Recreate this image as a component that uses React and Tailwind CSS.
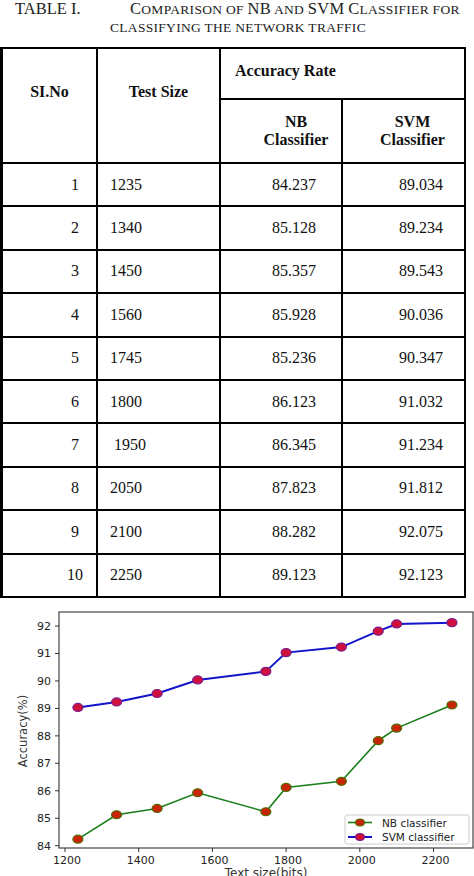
import React from "react";

const rows = [
  ["1", "1235", "84.237", "89.034"],
  ["2", "1340", "85.128", "89.234"],
  ["3", "1450", "85.357", "89.543"],
  ["4", "1560", "85.928", "90.036"],
  ["5", "1745", "85.236", "90.347"],
  ["6", "1800", "86.123", "91.032"],
  ["7", "\u00a01950", "86.345", "91.234"],
  ["8", "2050", "87.823", "91.812"],
  ["9", "2100", "88.282", "92.075"],
  ["10", "2250", "89.123", "92.123"],
];

const xs = [1235, 1340, 1450, 1560, 1745, 1800, 1950, 2050, 2100, 2250];
const nb = [84.237, 85.128, 85.357, 85.928, 85.236, 86.123, 86.345, 87.823, 88.282, 89.123];
const svm = [89.034, 89.234, 89.543, 90.036, 90.347, 91.032, 91.234, 91.812, 92.075, 92.123];

const px = (v) => 65 + (v - 1200) * 0.3685;
const py = (v) => 845.7 - (v - 84) * 27.46;

function SC({ text }) {
  // render small caps manually: uppercase letters big, lowercase as smaller capitals
  const parts = [];
  let cur = "";
  let curBig = null;
  for (const ch of text) {
    const big = ch !== ch.toLowerCase();
    if (curBig === null) curBig = big;
    if (big !== curBig) {
      parts.push([cur, curBig]);
      cur = "";
      curBig = big;
    }
    cur += ch;
  }
  if (cur) parts.push([cur, curBig]);
  return (
    <>
      {parts.map(([s, big], i) =>
        big ? (
          <span key={i} className="text-[16.5px] tracking-[0.3px]">{s}</span>
        ) : (
          <span key={i} className="text-[13.5px] tracking-[0.3px]">{s.toUpperCase()}</span>
        )
      )}
    </>
  );
}

function Chart() {
  const nbPts = xs.map((x, i) => `${px(x)},${py(nb[i])}`).join(" ");
  const svmPts = xs.map((x, i) => `${px(x)},${py(svm[i])}`).join(" ");
  const font = "'DejaVu Sans', sans-serif";
  return (
    <svg width="474" height="278" viewBox="0 598 474 278" className="block">
      <rect x="59" y="612" width="414" height="236" fill="#fff" stroke="#444" strokeWidth="1.2" />
      {[84, 85, 86, 87, 88, 89, 90, 91, 92].map((v) => (
        <g key={v}>
          <line x1="55" y1={py(v)} x2="59" y2={py(v)} stroke="#333" strokeWidth="1" />
          <text x="51" y={py(v) + 4} fontSize="11" textAnchor="end" fill="#222" fontFamily={font}>
            {v}
          </text>
        </g>
      ))}
      {[1200, 1400, 1600, 1800, 2000, 2200].map((v) => (
        <g key={v}>
          <line x1={px(v)} y1="848" x2={px(v)} y2="852" stroke="#333" strokeWidth="1" />
          <text x={px(v) + 2} y="864" fontSize="11" textAnchor="middle" fill="#222" fontFamily={font}>
            {v}
          </text>
        </g>
      ))}
      <text
        x="0"
        y="0"
        fontSize="11.5"
        textAnchor="middle"
        fill="#333"
        fontFamily={font}
        transform="translate(27 731) rotate(-90)"
      >
        Accuracy(%)
      </text>
      <text x="266" y="877" fontSize="12" textAnchor="middle" fill="#333" fontFamily={font}>
        Text size(bits)
      </text>
      <polyline points={svmPts} fill="none" stroke="#1414c8" strokeWidth="2" />
      <polyline points={nbPts} fill="none" stroke="#1a7f1a" strokeWidth="1.6" />
      {xs.map((x, i) => (
        <ellipse key={"s" + i} cx={px(x)} cy={py(svm[i])} rx="5" ry="4" fill="#d0103c" stroke="#7a1a8c" strokeWidth="1.2" />
      ))}
      {xs.map((x, i) => (
        <ellipse key={"n" + i} cx={px(x)} cy={py(nb[i])} rx="5" ry="4" fill="#c82408" stroke="#4f6a00" strokeWidth="1.2" />
      ))}
      <rect x="345" y="815" width="124" height="29" rx="2" fill="#fff" stroke="#ccc" strokeWidth="1" />
      <line x1="348" y1="822.5" x2="372" y2="822.5" stroke="#1a7f1a" strokeWidth="1.6" />
      <ellipse cx="360" cy="822.5" rx="4.5" ry="3.5" fill="#c82408" stroke="#4f6a00" strokeWidth="1.2" />
      <text x="382" y="826.5" fontSize="10.5" fill="#222" fontFamily={font}>NB classifier</text>
      <line x1="348" y1="837" x2="372" y2="837" stroke="#1414c8" strokeWidth="2" />
      <ellipse cx="360" cy="837" rx="4.5" ry="3.5" fill="#d0103c" stroke="#7a1a8c" strokeWidth="1.2" />
      <text x="382" y="841" fontSize="10.5" fill="#222" fontFamily={font}>SVM classifier</text>
    </svg>
  );
}

export default function App() {
  const cell = "border-r-2 border-b-2 border-black";
  return (
    <div
      className="w-[474px] h-[876px] bg-white overflow-hidden text-[#111]"
      style={{ fontFamily: "'Liberation Serif', 'Times New Roman', serif" }}
    >
      <div className="leading-[17px] h-[47px] text-[#222] whitespace-nowrap">
        <div className="flex items-baseline">
          <span className="pl-[15px] w-[130px] text-[16.5px]">TABLE I.</span>
          <span>
            <SC text="Comparison of NB and SVM Classifier for" />
          </span>
        </div>
        <div className="pl-[110px]">
          <SC text="classifying the network traffic" />
        </div>
      </div>
      <div className="w-[466px] border-t-2 border-l-[3px] border-black grid grid-cols-[95px_123px_122px_123px] grid-rows-[51px_64px_repeat(10,43.4px)] text-[16px] leading-[18px]">
        <div className={`${cell} row-span-2 flex items-center justify-center pb-[28px] font-bold`}>SI.No</div>
        <div className={`${cell} row-span-2 flex items-center justify-center pb-[28px] font-bold`}>Test Size</div>
        <div className={`${cell} col-span-2 flex items-center pl-[14px] pb-[6px] font-bold`}>Accuracy Rate</div>
        <div className={`${cell} flex flex-col items-center justify-center pl-[30px] font-bold`}>
          <span>NB</span>
          <span>Classifier</span>
        </div>
        <div className={`${cell} flex flex-col items-center justify-center pl-[18px] font-bold`}>
          <span>SVM</span>
          <span>Classifier</span>
        </div>
        {rows.map((r) => (
          <React.Fragment key={r[0]}>
            <div className={`${cell} flex items-center justify-center pl-[51px]`}>{r[0]}</div>
            <div className={`${cell} flex items-center pl-[12px]`}>{r[1]}</div>
            <div className={`${cell} flex items-center justify-end pr-[25px]`}>{r[2]}</div>
            <div className={`${cell} flex items-center justify-end pr-[21px]`}>{r[3]}</div>
          </React.Fragment>
        ))}
      </div>
      <Chart />
    </div>
  );
}
